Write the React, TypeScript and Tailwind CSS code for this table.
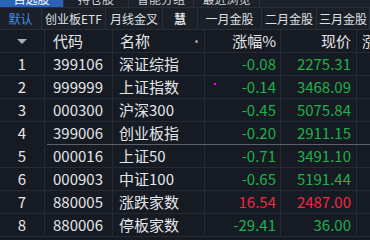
import React from "react";

const topTabs = [
  { label: "自选股", w: "w-[64px]", active: true },
  { label: "持仓股", w: "w-[65px]" },
  { label: "智能分组", w: "w-[65px]" },
  { label: "最近浏览", w: "w-[66px]" },
];

const groups = [
  { label: "默认", w: "w-[42px]", active: true },
  { label: "创业板ETF", w: "w-[64px]" },
  { label: "月线金叉", w: "w-[57px]" },
  { label: "慧", w: "w-[35px]", strong: true },
  { label: "一月金股", w: "w-[64px]" },
  { label: "二月金股", w: "w-[55px]" },
  { label: "三月金股", w: "w-[53px]" },
];

const rows = [
  { code: "399106", name: "深证综指", pct: "-0.08", price: "2275.31", up: false },
  { code: "999999", name: "上证指数", pct: "-0.14", price: "3468.09", up: false },
  { code: "000300", name: "沪深300", pct: "-0.45", price: "5075.84", up: false },
  { code: "399006", name: "创业板指", pct: "-0.20", price: "2911.15", up: false },
  { code: "000016", name: "上证50", pct: "-0.71", price: "3491.10", up: false },
  { code: "000903", name: "中证100", pct: "-0.65", price: "5191.44", up: false },
  { code: "880005", name: "涨跌家数", pct: "16.54", price: "2487.00", up: true },
  { code: "880006", name: "停板家数", pct: "-29.41", price: "36.00", up: false },
];

const cols = "grid grid-cols-[45px_68px_92px_76px_76px_1fr]";

export default function App() {
  return (
    <div
      className="w-[370px] h-[240px] overflow-hidden bg-[#161a22] text-[#e4e6ea]"
      style={{ fontFamily: '"Noto Sans CJK SC", "Noto Sans", sans-serif' }}
    >
      {/* top tabs, mostly scrolled out of view */}
      <div className="flex h-[8px] overflow-hidden bg-[#1d2129] border-b border-[#2a2e37]">
        {topTabs.map((t) => (
          <div
            key={t.label}
            className={`${t.w} shrink-0 border-r border-[#2f333c] overflow-hidden ${
              t.active ? "bg-[#2a63b9] text-white" : "text-[#cfd2d8]"
            }`}
          >
            <div className="-mt-[10px] h-[18px] text-[12px] leading-[18px] text-center">
              {t.label}
            </div>
          </div>
        ))}
      </div>

      {/* group tabs */}
      <div className="flex h-[22px] bg-[#1b1f27] border-b border-[#2a2e37] text-[12px] leading-[21px]">
        {groups.map((g) => (
          <div
            key={g.label}
            className={`${g.w} shrink-0 border-r border-[#2c3039] text-center whitespace-nowrap overflow-hidden ${
              g.active ? "text-[#3f8fe6]" : "text-[#dfe1e5]"
            } ${g.strong ? "font-bold" : ""}`}
          >
            {g.label}
          </div>
        ))}
      </div>

      {/* header */}
      <div className={`${cols} h-[23px] border-b border-[#262a33] text-[15px] leading-[22px]`}>
        <div className="flex items-center justify-center border-r border-[#262a33]">
          <span className="w-0 h-0 border-l-[5px] border-r-[5px] border-t-[5px] border-l-transparent border-r-transparent border-t-[#a9adb5]" />
        </div>
        <div className="pl-[8px] border-r border-[#262a33]">代码</div>
        <div className="pl-[7px] border-r border-[#262a33] relative">
          名称
          <span className="absolute right-[6px] top-[10px] w-[3px] h-[3px] rounded-full bg-[#9a9ea6]" />
        </div>
        <div className="pr-[4px] text-right border-r border-[#262a33]">涨幅%</div>
        <div className="pr-[5px] text-right border-r border-[#262a33]">现价</div>
        <div className="pl-[5px] whitespace-nowrap overflow-hidden">涨</div>
      </div>

      {rows.map((r, i) => {
        const color = r.up ? "text-[#ee2a43]" : "text-[#1fb14b]";
        return (
          <div
            key={r.code}
            className={`${cols} h-[23px] border-b text-[15px] leading-[22px] ${
              i === 3 ? "border-transparent relative" : "border-[#262a33]"
            }`}
          >
            <div className="text-center border-r border-[#262a33]">{i + 1}</div>
            <div className="pl-[8px] border-r border-[#262a33]">{r.code}</div>
            <div className="pl-[6px] border-r border-[#262a33] whitespace-nowrap">{r.name}</div>
            <div className={`pr-[4px] text-right border-r border-[#262a33] relative ${color}`}>
              {i === 1 && (
                <span className="absolute left-[9px] top-[7px] w-[2px] h-[2px] bg-[#ff00ff]" />
              )}
              {r.pct}
            </div>
            <div className={`pr-[5px] text-right border-r border-[#262a33] ${color}`}>{r.price}</div>
            <div />
            {i === 3 && (
              <span className="absolute left-[47px] right-0 -bottom-[1px] h-[1px] bg-[#5d6169]" />
            )}
          </div>
        );
      })}
    </div>
  );
}
